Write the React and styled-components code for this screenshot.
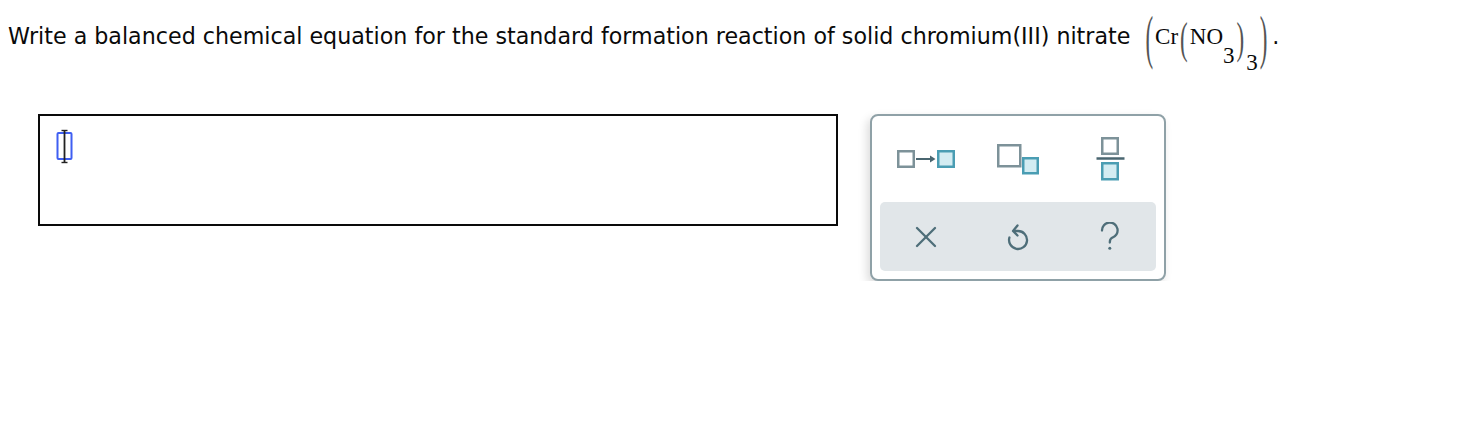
import styled, { createGlobalStyle } from 'styled-components';

const GlobalStyle = createGlobalStyle`
  body {
    margin: 8px;
    background: #fff;
    font-family: "DejaVu Sans", Verdana, sans-serif;
    color: #0a0a0a;
  }
`;

const ArrowIcon = () => (
  <svg width="58" height="18" viewBox="0 0 58 18">
    <rect x="1.25" y="1.25" width="15.5" height="15.5" fill="#fff" stroke="#7d9299" strokeWidth="2.5" />
    <line x1="19" y1="9" x2="35" y2="9" stroke="#4a6670" strokeWidth="2" />
    <path d="M33 5.5 L38.5 9 L33 12.5 Z" fill="#4a6670" />
    <rect x="41.25" y="1.25" width="15.5" height="15.5" fill="#d3ecf2" stroke="#4a9db3" strokeWidth="2.5" />
  </svg>
);

const SubscriptIcon = () => (
  <svg width="42" height="31" viewBox="0 0 42 31">
    <rect x="1.25" y="1.25" width="22" height="21" fill="#fff" stroke="#7d9299" strokeWidth="2.5" />
    <rect x="26.25" y="14.25" width="14.5" height="15" fill="#d3ecf2" stroke="#4a9db3" strokeWidth="2.5" />
  </svg>
);

const FractionIcon = () => (
  <svg width="29" height="44" viewBox="0 0 29 44">
    <rect x="6.25" y="1.25" width="15.5" height="15.5" fill="#fff" stroke="#7d9299" strokeWidth="2.5" />
    <line x1="0.5" y1="21.5" x2="28.5" y2="21.5" stroke="#4a6670" strokeWidth="2.5" />
    <rect x="6.25" y="26.25" width="15.5" height="16" fill="#d3ecf2" stroke="#4a9db3" strokeWidth="2.5" />
  </svg>
);

const ClearIcon = () => (
  <svg width="22" height="22" viewBox="0 0 22 22" fill="none" stroke="#4e6e79" strokeWidth="2.3" strokeLinecap="round">
    <line x1="2" y1="2" x2="20" y2="20" />
    <line x1="20" y1="2" x2="2" y2="20" />
  </svg>
);

const UndoIcon = () => (
  <svg width="24" height="28" viewBox="0 0 24 28" fill="none" stroke="#4e6e79" strokeWidth="2.3" strokeLinecap="round" strokeLinejoin="round">
    <path d="M3.4 14.5 A9 9 0 1 0 12 8 L8.5 8" />
    <path d="M11.5 2.5 L7 8 L11.5 12.5" />
  </svg>
);

const HelpIcon = () => (
  <svg width="22" height="30" viewBox="0 0 22 30" fill="none" stroke="#4e6e79" strokeWidth="2.3" strokeLinecap="round">
    <path d="M3 8.5 A7.8 7.8 0 1 1 13 15.8 C11.2 16.7 10.8 17.8 10.8 20.5" />
    <circle cx="10.8" cy="26.3" r="1.5" fill="#4e6e79" stroke="none" />
  </svg>
);

const CursorIcon = () => (
  <svg width="18" height="36" viewBox="0 0 18 36">
    <rect x="1.5" y="4" width="14" height="26" rx="1" fill="#fff" stroke="#3f5ff2" strokeWidth="2" />
    <line x1="8.5" y1="1" x2="8.5" y2="34" stroke="#222" strokeWidth="1.8" />
    <line x1="5.5" y1="1.5" x2="11.5" y2="1.5" stroke="#222" strokeWidth="1.4" />
    <line x1="5.5" y1="33.5" x2="11.5" y2="33.5" stroke="#222" strokeWidth="1.4" />
  </svg>
);

export default function App() {
  return (
    <>
      <GlobalStyle />
      <S.Question>
        Write a balanced chemical equation for the standard formation reaction of solid chromium(III) nitrate{' '}
        <S.Formula>
          <S.Paren $scale={2.55} $shift={1.7}>(</S.Paren>
          Cr
          <S.Paren $scale={1.95} $shift={2}>(</S.Paren>
          NO
          <S.Sub $drop={19}>3</S.Sub>
          <S.Paren $scale={1.95} $shift={2}>)</S.Paren>
          <S.Sub $drop={26}>3</S.Sub>
          <S.Paren $scale={2.55} $shift={1.7}>)</S.Paren>
        </S.Formula>
        .
      </S.Question>
      <S.Row>
        <S.AnswerBox>
          <CursorIcon />
        </S.AnswerBox>
        <S.Palette>
          <S.TemplateRow>
            <S.Key><ArrowIcon /></S.Key>
            <S.Key><SubscriptIcon /></S.Key>
            <S.Key><FractionIcon /></S.Key>
          </S.TemplateRow>
          <S.ActionRow>
            <S.Key><ClearIcon /></S.Key>
            <S.Key><UndoIcon /></S.Key>
            <S.Key><HelpIcon /></S.Key>
          </S.ActionRow>
        </S.Palette>
      </S.Row>
    </>
  );
}

const S = {
  Question: styled.div`
    height: 57px;
    font-size: 22.2px;
    line-height: 57px;
    white-space: nowrap;
  `,
  Formula: styled.span`
    font-family: "Liberation Serif", "Times New Roman", serif;
    font-size: 23px;
    margin: 0 3px 0 6px;
  `,
  Paren: styled.span`
    display: inline-block;
    line-height: 23px;
    margin: 0 2px;
    color: #555;
    transform: translateY(${({ $shift }) => $shift}px) scaleY(${({ $scale }) => $scale});
  `,
  Sub: styled.span`
    display: inline-block;
    font-family: "Liberation Serif", "Times New Roman", serif;
    line-height: 23px;
    vertical-align: -${({ $drop }) => $drop}px;
  `,
  Row: styled.div`
    display: flex;
    align-items: flex-start;
    gap: 32px;
    margin: 49px 0 0 30px;
  `,
  AnswerBox: styled.div`
    box-sizing: border-box;
    width: 800px;
    height: 112px;
    border: 2px solid #0a0a0a;
    padding: 13px 0 0 16px;
  `,
  Palette: styled.div`
    box-sizing: border-box;
    width: 296px;
    height: 167px;
    padding: 0 8px 8px;
    border: 2px solid #8fa1a7;
    border-radius: 8px;
    background: #fff;
    box-shadow: -3px 4px 10px rgba(0, 0, 0, 0.14);
    display: flex;
    flex-direction: column;
  `,
  TemplateRow: styled.div`
    display: grid;
    grid-template-columns: repeat(3, 1fr);
    height: 86px;
  `,
  ActionRow: styled.div`
    display: grid;
    grid-template-columns: repeat(3, 1fr);
    flex: 1;
    background: #e1e6e9;
    border-radius: 5px;
  `,
  Key: styled.div`
    display: flex;
    align-items: center;
    justify-content: center;
  `,
};
